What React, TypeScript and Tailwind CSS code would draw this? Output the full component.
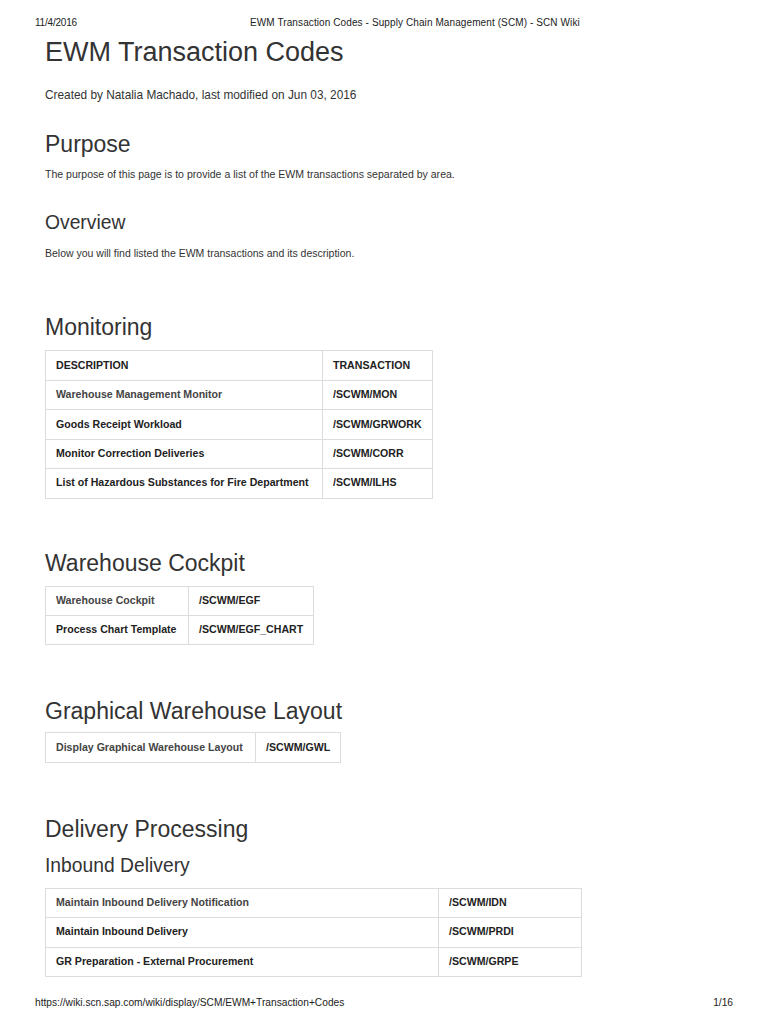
import React from "react";

const font = { fontFamily: '"Liberation Sans", Arial, sans-serif' };

type Row = [string, string];

function DataTable({
  rows,
  w1,
  w2,
  header,
}: {
  rows: Row[];
  w1: string;
  w2: string;
  header?: Row;
}) {
  const all = header ? [header, ...rows] : rows;
  return (
    <table className="border-collapse border border-[#dcdcdc] text-[10.6px] font-bold text-[#222]">
      <tbody>
        {all.map((r, i) => (
          <tr key={i} className={header && i === 0 ? "h-[30px]" : "h-[29.4px]"}>
            <td className={`border border-[#dcdcdc] px-[10px] py-0 align-middle ${w1} ${i === 0 && !header ? "text-[#444]" : ""} ${header && i === 1 ? "text-[#444]" : ""}`}>
              {r[0]}
            </td>
            <td className={`border border-[#dcdcdc] px-[10px] py-0 align-middle ${w2}`}>{r[1]}</td>
          </tr>
        ))}
      </tbody>
    </table>
  );
}

export default function App() {
  return (
    <div className="w-[768px] h-[1024px] bg-white flex flex-col text-[#333]" style={font}>
      <div className="pt-[16px] h-[30px] flex text-[10px] leading-[14px] text-[#222]">
        <span className="ml-[35px] w-[215px] tracking-[-0.2px]">11/4/2016</span>
        <span className="tracking-[0.1px]">
          EWM Transaction Codes - Supply Chain Management (SCM) - SCN Wiki
        </span>
      </div>

      <div className="pl-[45px] flex flex-col items-start">
        <h1 className="mt-[6px] text-[27px] leading-[32px] font-normal text-[#333]">
          EWM Transaction Codes
        </h1>
        <p className="mt-[19px] text-[11.85px] leading-[16px] text-[#333]">
          Created by Natalia Machado, last modified on Jun 03, 2016
        </p>

        <h2 className="mt-[26px] text-[23px] leading-[30px] font-normal">Purpose</h2>
        <p className="mt-[8px] text-[10.55px] leading-[14px] text-[#333]">
          The purpose of this page is to provide a list of the EWM transactions separated by area.
        </p>

        <h3 className="mt-[29px] text-[19.3px] leading-[26px] font-normal">Overview</h3>
        <p className="mt-[10px] text-[10.5px] leading-[14px] text-[#333]">
          Below you will find listed the EWM transactions and its description.
        </p>

        <h2 className="mt-[52px] text-[23px] leading-[30px] font-normal">Monitoring</h2>
        <div className="mt-[8px]">
          <DataTable
            w1="w-[277px]"
            w2="w-[110px]"
            header={["DESCRIPTION", "TRANSACTION"]}
            rows={[
              ["Warehouse Management Monitor", "/SCWM/MON"],
              ["Goods Receipt Workload", "/SCWM/GRWORK"],
              ["Monitor Correction Deliveries", "/SCWM/CORR"],
              ["List of Hazardous Substances for Fire Department", "/SCWM/ILHS"],
            ]}
          />
        </div>

        <h2 className="mt-[49px] text-[23px] leading-[30px] font-normal">Warehouse Cockpit</h2>
        <div className="mt-[8px]">
          <DataTable
            w1="w-[143px]"
            w2="w-[124px]"
            rows={[
              ["Warehouse Cockpit", "/SCWM/EGF"],
              ["Process Chart Template", "/SCWM/EGF_CHART"],
            ]}
          />
        </div>

        <h2 className="mt-[51px] text-[23px] leading-[30px] font-normal">
          Graphical Warehouse Layout
        </h2>
        <div className="mt-[6px]">
          <DataTable
            w1="w-[210px]"
            w2="w-[84px]"
            rows={[["Display Graphical Warehouse Layout", "/SCWM/GWL"]]}
          />
        </div>

        <h2 className="mt-[51px] text-[23px] leading-[30px] font-normal">Delivery Processing</h2>
        <h3 className="mt-[9px] text-[19.3px] leading-[26px] font-normal">Inbound Delivery</h3>
        <div className="mt-[9px]">
          <DataTable
            w1="w-[393px]"
            w2="w-[143px]"
            rows={[
              ["Maintain Inbound Delivery Notification", "/SCWM/IDN"],
              ["Maintain Inbound Delivery", "/SCWM/PRDI"],
              ["GR Preparation - External Procurement", "/SCWM/GRPE"],
            ]}
          />
        </div>
      </div>

      <div className="mt-auto pb-[14px] pl-[35px] pr-[35px] flex justify-between text-[10.2px] leading-[14px] text-[#222]">
        <span>https://wiki.scn.sap.com/wiki/display/SCM/EWM+Transaction+Codes</span>
        <span>1/16</span>
      </div>
    </div>
  );
}
